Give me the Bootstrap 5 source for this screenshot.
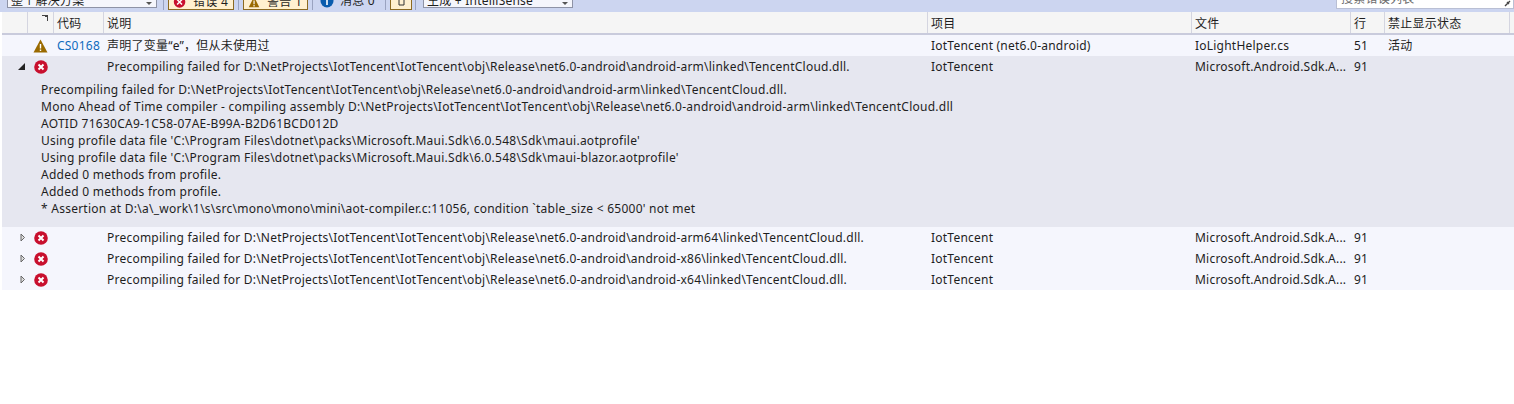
<!DOCTYPE html>
<html lang="zh">
  <head>
    <meta charset="UTF-8" />
    <title>错误列表</title>
    <link href="https://cdn.jsdelivr.net/npm/bootstrap@5.3.3/dist/css/bootstrap.min.css" rel="stylesheet" />
    <style>
      body {
        background: #fff;
        font-family: "Noto Sans", "Noto Sans CJK SC", sans-serif;
        font-size: 12px;
        line-height: 16px;
        letter-spacing: 0.225px;
        color: #1e1e1e;
        overflow: hidden;
      }
      .tool-strip {
        height: 12px;
        background: #ccd5f0;
        overflow: hidden;
        align-items: flex-end;
      }
      .tool-inner {
        height: 22px;
        margin-bottom: 2px;
        align-items: stretch;
        white-space: nowrap;
      }
      .tool-combo {
        background: #f5f6fc;
        border: 1px solid #8e93a6;
        margin-bottom: 2px;
        padding: 4px 3px 0 3px;
        width: 150px;
        position: relative;
      }
      .tool-combo::after {
        content: "";
        position: absolute;
        right: 4px;
        top: 13px;
        border: 3px solid transparent;
        border-top-color: #555;
      }
      .tool-btn {
        background: #fff0d0;
        border: 1px solid #8c6a22;
        padding: 5px 5px 0 4px;
        display: flex;
        gap: 7px;
      }
      .tool-plain {
        padding: 5px 0 0 0;
        display: flex;
        gap: 6px;
      }
      .tool-sep {
        width: 1px;
        background: #9aa3c0;
      }
      .search-box {
        position: absolute;
        top: 0;
        left: 1336px;
        width: 178px;
        height: 9px;
        overflow: hidden;
        background: #fff;
        border: 1px solid #b9bfd4;
        border-top: 0;
      }
      .search-box span {
        position: absolute;
        bottom: 1px;
        left: 4px;
        color: #6d6d6d;
        white-space: nowrap;
      }
      .search-box svg {
        position: absolute;
        right: 2px;
        bottom: 1px;
      }
      .err-grid {
        display: grid;
        grid-template-columns: 26px 26px 50px 824px 264px 159px 34px 125px;
        margin-left: 2px;
        width: 1512px;
      }
      .head-row {
        height: 23px;
        background: #f5f5f5;
        border-bottom: 2px solid #c9cbdc;
      }
      .head-row > div {
        border-right: 1px solid #d4d5e0;
        padding: 4px 0 0 3px;
        white-space: nowrap;
        position: relative;
      }
      .data-row {
        height: 21px;
        background: #f5f6fd;
      }
      .data-row.open {
        background: #e6e7f0;
      }
      .data-row > div {
        padding: 3px 0 0 3px;
        white-space: nowrap;
        overflow: hidden;
      }
      .data-row > .exp-cell,
      .data-row > .ico-cell {
        padding: 0;
        display: flex;
        align-items: center;
        justify-content: center;
      }
      .data-row > .ico-cell {
        padding-right: 1px;
      }
      .data-row > .exp-cell {
        justify-content: flex-end;
        padding-right: 3px;
      }
      .code-link {
        color: #0f6cbd;
      }
      .detail-box {
        margin-left: 2px;
        height: 150px;
        background: #e6e7f0;
        padding: 4px 0 0 39px;
        line-height: 17px;
        letter-spacing: 0.25px;
      }
      .sort-mark {
        position: absolute;
        right: 5px;
        top: 3px;
      }
    </style>
  </head>
  <body>
    <div class="position-relative">
      <div class="tool-strip d-flex">
        <div class="tool-inner d-flex">
          <div class="tool-combo" style="margin-left:7px">整个解决方案</div>
          <div class="tool-sep" style="margin-left:6px"></div>
          <div class="tool-btn" style="margin-left:4px;width:66px">
            <svg width="16" height="16" viewBox="0 0 16 16"><circle cx="8" cy="8" r="7" fill="#c8102e"/><path d="M5 5l6 6M11 5l-6 6" stroke="#fff" stroke-width="1.8"/></svg>
            <span>错误 4</span>
          </div>
          <div class="tool-sep" style="margin-left:4px"></div>
          <div class="tool-btn" style="margin-left:4px;width:65px">
            <svg width="16" height="16" viewBox="0 0 16 16"><path d="M8 1l7 14H1z" fill="#9a6a00"/><path d="M8 6v5M8 12v2" stroke="#fff" stroke-width="1.5"/></svg>
            <span>警告 1</span>
          </div>
          <div class="tool-sep" style="margin-left:4px"></div>
          <div class="tool-plain" style="margin-left:7px;width:65px">
            <svg width="14" height="16" viewBox="0 0 14 16"><circle cx="7" cy="8" r="6.5" fill="#0a5cad"/><path d="M7 7v5M7 4v2" stroke="#fff" stroke-width="1.6"/></svg>
            <span>消息 0</span>
          </div>
          <div class="tool-sep"></div>
          <div class="tool-btn justify-content-center" style="margin-left:4px;width:22px;padding:0">
            <svg width="9" height="18" viewBox="0 0 9 18"><path d="M2 2h5v14H2z" fill="none" stroke="#333"/></svg>
          </div>
          <div class="tool-sep" style="margin-left:3px"></div>
          <div class="tool-combo" style="margin-left:7px">生成 + IntelliSense</div>
        </div>
      </div>
      <div class="search-box">
        <span>搜索错误列表</span>
        <svg width="7" height="7" viewBox="0 0 7 7"><path d="M1 6l5-5M3 2l2 2" stroke="#444" stroke-width="1.4"/></svg>
      </div>

      <div class="err-grid head-row">
        <div></div>
        <div>
          <svg class="sort-mark" width="6" height="6" viewBox="0 0 6 6"><path d="M0 0h6v6H5V2H3V1H0z" fill="#444"/></svg>
        </div>
        <div>代码</div>
        <div>说明</div>
        <div>项目</div>
        <div>文件</div>
        <div>行</div>
        <div>禁止显示状态</div>
      </div>

      <div class="err-grid data-row">
        <div class="exp-cell"></div>
        <div class="ico-cell">
          <svg width="15" height="14" viewBox="0 0 15 14"><path d="M7.5 .5l7 13H.5z" fill="#9a6a00"/><path d="M7.5 5v4.5M7.5 10.5v1.6" stroke="#fff" stroke-width="1.4"/></svg>
        </div>
        <div class="code-link">CS0168</div>
        <div>声明了变量“e”，但从未使用过</div>
        <div>IotTencent (net6.0-android)</div>
        <div>IoLightHelper.cs</div>
        <div>51</div>
        <div>活动</div>
      </div>

      <div class="err-grid data-row open">
        <div class="exp-cell">
          <svg width="7" height="7" viewBox="0 0 7 7"><path d="M7 0v7H0z" fill="#222"/></svg>
        </div>
        <div class="ico-cell">
          <svg width="14" height="14" viewBox="0 0 14 14"><circle cx="7" cy="7" r="6.8" fill="#c8102e"/><path d="M4.5 4.5l5 5M9.5 4.5l-5 5" stroke="#fff" stroke-width="2"/></svg>
        </div>
        <div></div>
        <div>Precompiling failed for D:\NetProjects\IotTencent\IotTencent\obj\Release\net6.0-android\android-arm\linked\TencentCloud.dll.</div>
        <div>IotTencent</div>
        <div>Microsoft.Android.Sdk.A...</div>
        <div>91</div>
        <div></div>
      </div>

      <div class="detail-box">
        <div>Precompiling failed for D:\NetProjects\IotTencent\IotTencent\obj\Release\net6.0-android\android-arm\linked\TencentCloud.dll.</div>
        <div>Mono Ahead of Time compiler - compiling assembly D:\NetProjects\IotTencent\IotTencent\obj\Release\net6.0-android\android-arm\linked\TencentCloud.dll</div>
        <div>AOTID 71630CA9-1C58-07AE-B99A-B2D61BCD012D</div>
        <div>Using profile data file 'C:\Program Files\dotnet\packs\Microsoft.Maui.Sdk\6.0.548\Sdk\maui.aotprofile'</div>
        <div>Using profile data file 'C:\Program Files\dotnet\packs\Microsoft.Maui.Sdk\6.0.548\Sdk\maui-blazor.aotprofile'</div>
        <div>Added 0 methods from profile.</div>
        <div>Added 0 methods from profile.</div>
        <div>* Assertion at D:\a\_work\1\s\src\mono\mono\mini\aot-compiler.c:11056, condition `table_size &lt; 65000' not met</div>
      </div>

      <div class="err-grid data-row">
        <div class="exp-cell"><svg width="7" height="9" viewBox="0 0 7 9"><path d="M3 1l3.5 3.5L3 8z" fill="#ddd" stroke="#666"/></svg></div>
        <div class="ico-cell"><svg width="14" height="14" viewBox="0 0 14 14"><circle cx="7" cy="7" r="6.8" fill="#c8102e"/><path d="M4.5 4.5l5 5M9.5 4.5l-5 5" stroke="#fff" stroke-width="2"/></svg></div>
        <div></div>
        <div>Precompiling failed for D:\NetProjects\IotTencent\IotTencent\obj\Release\net6.0-android\android-arm64\linked\TencentCloud.dll.</div>
        <div>IotTencent</div>
        <div>Microsoft.Android.Sdk.A...</div>
        <div>91</div>
        <div></div>
      </div>
      <div class="err-grid data-row">
        <div class="exp-cell"><svg width="7" height="9" viewBox="0 0 7 9"><path d="M3 1l3.5 3.5L3 8z" fill="#ddd" stroke="#666"/></svg></div>
        <div class="ico-cell"><svg width="14" height="14" viewBox="0 0 14 14"><circle cx="7" cy="7" r="6.8" fill="#c8102e"/><path d="M4.5 4.5l5 5M9.5 4.5l-5 5" stroke="#fff" stroke-width="2"/></svg></div>
        <div></div>
        <div>Precompiling failed for D:\NetProjects\IotTencent\IotTencent\obj\Release\net6.0-android\android-x86\linked\TencentCloud.dll.</div>
        <div>IotTencent</div>
        <div>Microsoft.Android.Sdk.A...</div>
        <div>91</div>
        <div></div>
      </div>
      <div class="err-grid data-row">
        <div class="exp-cell"><svg width="7" height="9" viewBox="0 0 7 9"><path d="M3 1l3.5 3.5L3 8z" fill="#ddd" stroke="#666"/></svg></div>
        <div class="ico-cell"><svg width="14" height="14" viewBox="0 0 14 14"><circle cx="7" cy="7" r="6.8" fill="#c8102e"/><path d="M4.5 4.5l5 5M9.5 4.5l-5 5" stroke="#fff" stroke-width="2"/></svg></div>
        <div></div>
        <div>Precompiling failed for D:\NetProjects\IotTencent\IotTencent\obj\Release\net6.0-android\android-x64\linked\TencentCloud.dll.</div>
        <div>IotTencent</div>
        <div>Microsoft.Android.Sdk.A...</div>
        <div>91</div>
        <div></div>
      </div>
    </div>
    <script src="https://cdn.jsdelivr.net/npm/bootstrap@5.3.3/dist/js/bootstrap.bundle.min.js"></script>
  </body>
</html>
